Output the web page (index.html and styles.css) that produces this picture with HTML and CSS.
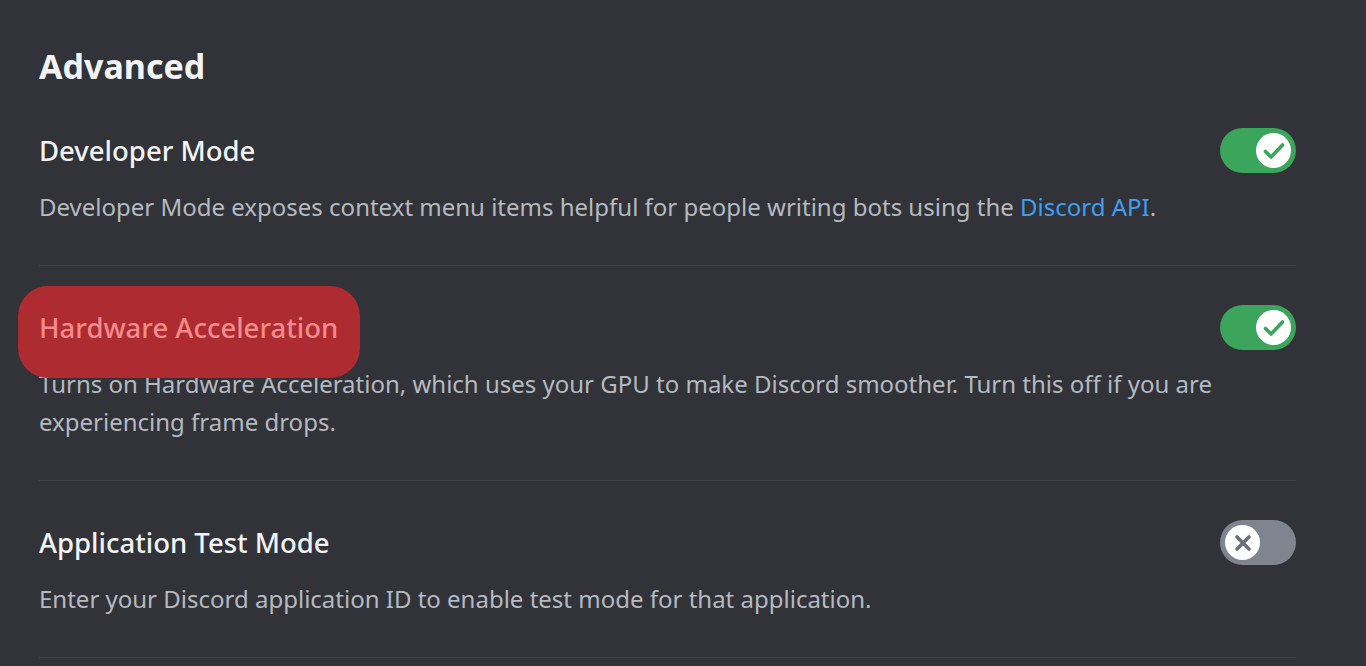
FILE: index.html
```html
<!DOCTYPE html>
<html lang="en">
<head>
<meta charset="utf-8">
<title>Advanced</title>
<link rel="stylesheet" href="styles.css">
</head>
<body>
<main class="page">
  <h2 class="section-title">Advanced</h2>

  <section class="setting">
    <div class="setting-head">
      <span class="setting-title">Developer Mode</span>
      <span class="toggle on"><span class="knob"><svg viewBox="0 0 34 34"><path d="M8.5 17.5l5.5 5.5 11.5-12" fill="none" stroke="#3ba55c" stroke-width="3.6" stroke-linecap="round" stroke-linejoin="round"/></svg></span></span>
    </div>
    <p class="setting-desc">Developer Mode exposes context menu items helpful for people writing bots using the <a class="link" href="#">Discord API</a>.</p>
  </section>

  <section class="setting">
    <div class="setting-head">
      <span class="setting-title highlighted">Hardware Acceleration</span>
      <span class="toggle on"><span class="knob"><svg viewBox="0 0 34 34"><path d="M8.5 17.5l5.5 5.5 11.5-12" fill="none" stroke="#3ba55c" stroke-width="3.6" stroke-linecap="round" stroke-linejoin="round"/></svg></span></span>
    </div>
    <p class="setting-desc">Turns on Hardware Acceleration, which uses your GPU to make Discord smoother. Turn this off if you are experiencing frame drops.</p>
  </section>

  <section class="setting">
    <div class="setting-head">
      <span class="setting-title">Application Test Mode</span>
      <span class="toggle off"><span class="knob"><svg viewBox="0 0 34 34"><path d="M11 11l12 12M23 11l-12 12" fill="none" stroke="#6d6f78" stroke-width="3.6" stroke-linecap="round"/></svg></span></span>
    </div>
    <p class="setting-desc">Enter your Discord application ID to enable test mode for that application.</p>
  </section>
</main>
</body>
</html>
```
FILE: styles.css
```css
* { box-sizing: border-box; }
html, body { margin: 0; padding: 0; }
body {
  background: #313338;
  font-family: "Noto Sans", "Open Sans", sans-serif;
  color: #f2f3f5;
  height: 666px;
  overflow: hidden;
}
.page {
  padding: 46px 70px 0 39px;
}
.section-title {
  margin: 0 0 3px 0;
  font-size: 34px;
  line-height: 40px;
  font-weight: 700;
  color: #f2f3f5;
}
.setting {
  padding: 39px 0 39px;
  border-bottom: 1px solid #404249;
}
.setting-head {
  display: flex;
  justify-content: space-between;
  align-items: center;
  height: 45px;
}
.setting-title {
  font-size: 27.5px;
  font-weight: 500;
  line-height: 45px;
  color: #f2f3f5;
}
.setting-title.highlighted {
  position: relative;
  color: #f28b8b;
  z-index: 0;
}
.setting-title.highlighted::before {
  content: "";
  position: absolute;
  left: -21px;
  right: -22px;
  top: -19px;
  bottom: -28px;
  background: #ad2b31;
  border-radius: 30px;
  z-index: -1;
}
.setting-desc {
  margin: 15px 0 0 0;
  font-size: 24px;
  line-height: 38px;
  color: #b5bac1;
  max-width: 1190px;
}
.link {
  color: #3f9ff0;
  text-decoration: none;
}
.toggle {
  width: 76px;
  height: 45px;
  border-radius: 23px;
  display: flex;
  align-items: center;
  padding: 0 5px;
  flex-shrink: 0;
}
.toggle.on { background: #3ba55c; justify-content: flex-end; }
.toggle.off { background: #80848e; justify-content: flex-start; }
.knob {
  width: 35px;
  height: 35px;
  border-radius: 50%;
  background: #ffffff;
  display: flex;
  align-items: center;
  justify-content: center;
}
.knob svg { width: 34px; height: 34px; display: block; }
```
